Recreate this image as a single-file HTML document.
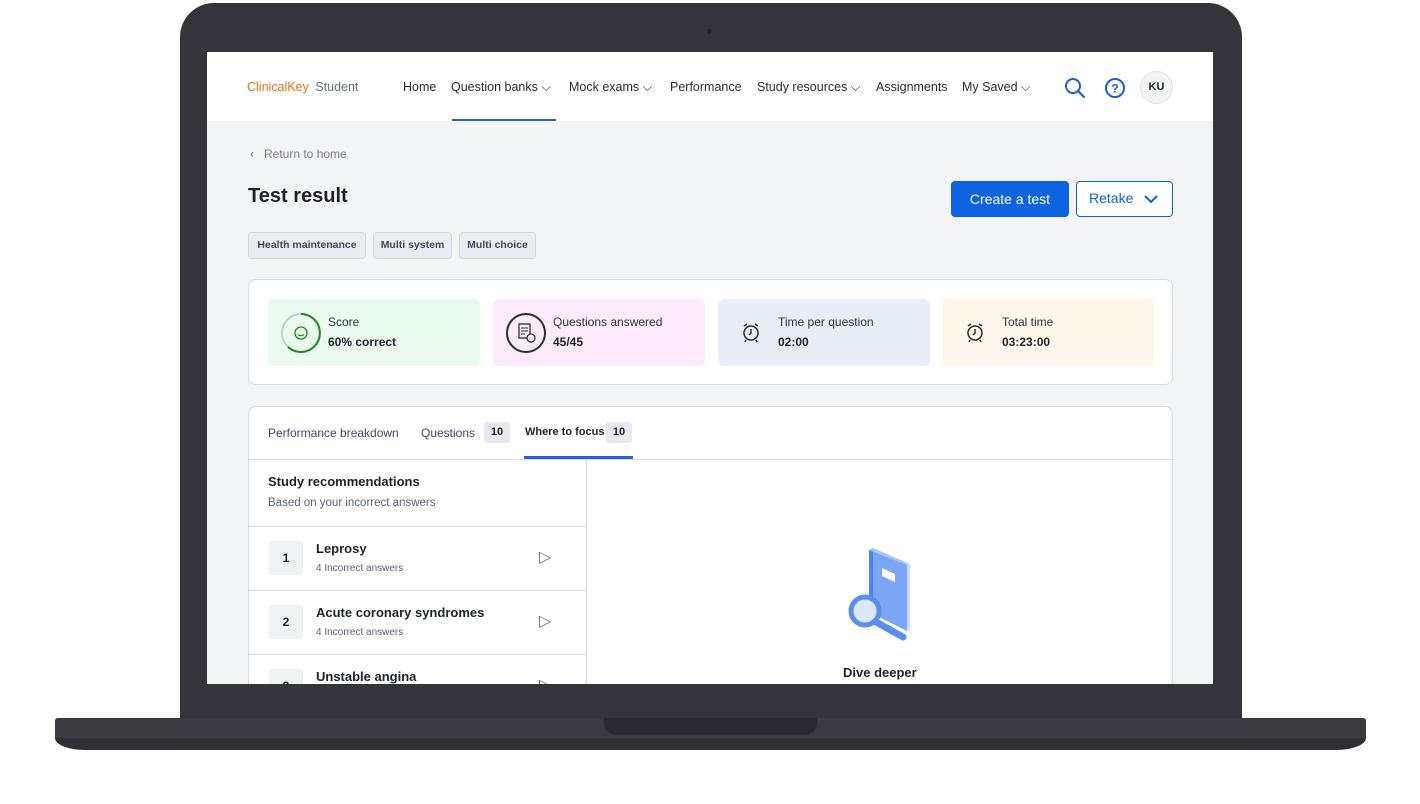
<!DOCTYPE html>
<html><head><meta charset="utf-8"><style>
*{margin:0;padding:0;box-sizing:border-box}
body{width:1420px;height:804px;background:#fff;position:relative;overflow:hidden;font-family:"Liberation Sans",sans-serif;color:#1f2329}
.a{position:absolute}
.body{left:180px;top:3px;width:1062px;height:725px;background:#34343a;border-radius:34px 34px 0 0}
.base{left:55px;top:718px;width:1311px;height:32px;background:#2f2f35;border-radius:3px 3px 30px 30px/3px 3px 12px 12px}
.base2{left:55px;top:718px;width:1311px;height:20px;background:#3a3a40;border-radius:3px 3px 0 0}
.notch{left:604px;top:718px;width:213px;height:17px;background:#2a2a30;border-radius:0 0 12px 12px}
.screen{left:207px;top:52px;width:1006px;height:632px;background:#f2f4f6;overflow:hidden}
.nav{left:0;top:0;width:1006px;height:69px;background:#fff}
.t{position:absolute;white-space:nowrap}
.chip{position:absolute;top:180px;height:27px;border:1px solid #d5d9df;background:#e9ecf0;border-radius:4px;font-size:10.5px;font-weight:bold;color:#3f4a60;line-height:25px;text-align:center}
.card{position:absolute;background:#fff;border:1px solid #d9dde2;border-radius:8px}
.stat{position:absolute;top:19px;width:212px;height:67px;border-radius:6px}
.stat .l{position:absolute;left:60px;top:16px;font-size:12px;color:#2c3440}
.stat .v{position:absolute;left:60px;top:36px;font-size:12px;font-weight:bold;color:#1f2329}
.row{position:absolute;left:0;width:337px;height:64px;border-top:1px solid #d9dde2}
.num{position:absolute;left:20px;top:14px;width:34px;height:34px;background:#f0f2f4;border-radius:3px;font-size:12px;font-weight:bold;text-align:center;line-height:34px}
.rt{position:absolute;left:67px;top:14px;font-size:13px;font-weight:bold}
.rs{position:absolute;left:67px;top:36px;font-size:10px;color:#5a6270}
</style></head><body>
<div class="a body"></div>
<div class="a" style="left:707px;top:29px;width:5px;height:5px;border-radius:50%;background:#26262b"></div>
<div class="a base"></div>
<div class="a base2"></div>
<div class="a notch"></div>
<div class="a screen">
 <div class="a nav">
  <div class="t" style="left:40px;top:28px;font-size:12.5px;color:#e9711c">ClinicalKey <span style="color:#6a6f76;margin-left:3px">Student</span></div>
  <div class="t" style="left:196px;top:28px;font-size:12.5px;color:#2a2e35">Home</div>
  <div class="t" style="left:244px;top:28px;font-size:12.5px;color:#2a2e35">Question banks ⌵</div>
  <div class="a" style="left:245px;top:67px;width:104px;height:2px;background:#2a62d6"></div>
  <div class="t" style="left:362px;top:28px;font-size:12.5px;color:#2a2e35">Mock exams ⌵</div>
  <div class="t" style="left:463px;top:28px;font-size:12.5px;color:#2a2e35">Performance</div>
  <div class="t" style="left:550px;top:28px;font-size:12.5px;color:#2a2e35">Study resources ⌵</div>
  <div class="t" style="left:669px;top:28px;font-size:12.5px;color:#2a2e35">Assignments</div>
  <div class="t" style="left:755px;top:28px;font-size:12.5px;color:#2a2e35">My Saved ⌵</div>
  <svg class="a" style="left:857px;top:25px" width="22" height="22" viewBox="0 0 22 22"><circle cx="9" cy="9" r="7" fill="none" stroke="#1f5fcc" stroke-width="2"/><path d="M14 14l6 6" stroke="#1f5fcc" stroke-width="2.2" stroke-linecap="round"/></svg>
  <svg class="a" style="left:897px;top:25px" width="22" height="22" viewBox="0 0 22 22"><circle cx="11" cy="11" r="9" fill="none" stroke="#1f5fcc" stroke-width="2"/><text x="11" y="15.5" font-size="12" font-weight="bold" text-anchor="middle" fill="#1f5fcc" font-family="Liberation Sans">?</text></svg>
  <div class="a" style="left:933px;top:19px;width:33px;height:33px;border-radius:50%;background:#f2f3f5;border:1px solid #e0e2e6;font-size:11px;font-weight:bold;text-align:center;line-height:31px">KU</div>
 </div>
 <div class="t" style="left:43px;top:95px;font-size:12px;color:#7a818c">‹&nbsp;&nbsp;&nbsp;Return to home</div>
 <div class="t" style="left:41px;top:133px;font-size:20px;font-weight:bold;color:#1f2329">Test result</div>
 <div class="a" style="left:744px;top:129px;width:118px;height:36px;background:#0b63e0;border-radius:4px;color:#fff;font-size:14px;text-align:center;line-height:36px">Create a test</div>
 <div class="a" style="left:869px;top:129px;width:97px;height:36px;background:#fff;border:1.5px solid #0b63e0;border-radius:4px;color:#0b63e0;font-size:14px;line-height:33px;padding-left:12px">Retake
  <svg style="position:absolute;left:67px;top:12px" width="14" height="10" viewBox="0 0 14 10"><path d="M1 2l6 6 6-6" fill="none" stroke="#0b63e0" stroke-width="2"/></svg></div>
 <div class="chip" style="left:41px;width:118px">Health maintenance</div>
 <div class="chip" style="left:166px;width:79px">Multi system</div>
 <div class="chip" style="left:252px;width:77px">Multi choice</div>
 <div class="card" style="left:41px;top:227px;width:925px;height:106px">
  <div class="stat" style="left:19px;background:#ebfaef">
   <svg class="a" style="left:12px;top:13px" width="42" height="42" viewBox="0 0 42 42"><circle cx="21" cy="21" r="19" fill="none" stroke="#c9ccd0" stroke-width="2"/><path d="M21 2A19 19 0 1 1 8 35" fill="none" stroke="#1e8a1e" stroke-width="2"/><circle cx="21" cy="21" r="6" fill="none" stroke="#1e8a1e" stroke-width="1.3"/><path d="M18 22.5q3 2.5 6 0" fill="none" stroke="#1e8a1e" stroke-width="1.2"/></svg>
   <div class="l">Score</div><div class="v">60% correct</div></div>
  <div class="stat" style="left:244px;background:#fdeafb">
   <svg class="a" style="left:12px;top:13px" width="42" height="42" viewBox="0 0 42 42"><circle cx="21" cy="21" r="19" fill="none" stroke="#2a2f38" stroke-width="2"/><rect x="14" y="12" width="11" height="14" fill="none" stroke="#2a2f38" stroke-width="1.3"/><path d="M16 16h7M16 19h7M16 22h4" stroke="#2a2f38"/><circle cx="26" cy="26" r="4" fill="#fdeafb" stroke="#2a2f38" stroke-width="1.3"/></svg>
   <div class="l">Questions answered</div><div class="v">45/45</div></div>
  <div class="stat" style="left:469px;background:#e8eef7">
   <svg class="a" style="left:22px;top:22px" width="22" height="22" viewBox="0 0 22 22"><circle cx="11" cy="12" r="7" fill="none" stroke="#2a2f38" stroke-width="1.5"/><path d="M11 8v4l-2 2M4 5l3-2M18 5l-3-2M6 19l-1 2M16 19l1 2" stroke="#2a2f38" stroke-width="1.5" fill="none"/></svg>
   <div class="l">Time per question</div><div class="v">02:00</div></div>
  <div class="stat" style="left:693px;background:#fff6ec">
   <svg class="a" style="left:22px;top:22px" width="22" height="22" viewBox="0 0 22 22"><circle cx="11" cy="12" r="7" fill="none" stroke="#2a2f38" stroke-width="1.5"/><path d="M11 8v4l-2 2M4 5l3-2M18 5l-3-2M6 19l-1 2M16 19l1 2" stroke="#2a2f38" stroke-width="1.5" fill="none"/></svg>
   <div class="l">Total time</div><div class="v">03:23:00</div></div>
 </div>
 <div class="card" style="left:41px;top:354px;width:925px;height:300px;border-radius:8px 8px 0 0;overflow:hidden">
  <div class="t" style="left:19px;top:19px;font-size:12px;color:#3f4a60">Performance breakdown</div>
  <div class="t" style="left:172px;top:19px;font-size:12px;color:#3f4a60">Questions</div>
  <div class="a" style="left:235px;top:15px;width:26px;height:21px;background:#e6e9ed;border-radius:3px;font-size:11px;font-weight:bold;text-align:center;line-height:21px">10</div>
  <div class="t" style="left:276px;top:19px;font-size:11px;font-weight:bold;color:#1f2329">Where to focus</div>
  <div class="a" style="left:357px;top:15px;width:26px;height:21px;background:#e6e9ed;border-radius:3px;font-size:11px;font-weight:bold;text-align:center;line-height:21px">10</div>
  <div class="a" style="left:275px;top:49px;width:109px;height:3px;background:#2a62d6"></div>
  <div class="a" style="left:0;top:52px;width:925px;height:1px;background:#d9dde2"></div>
  <div class="a" style="left:337px;top:52px;width:1px;height:260px;background:#d9dde2"></div>
  <div class="t" style="left:19px;top:67px;font-size:13px;font-weight:bold">Study recommendations</div>
  <div class="t" style="left:19px;top:90px;font-size:11.5px;color:#5a6270">Based on your incorrect answers</div>
  <div class="row" style="top:119px"><div class="num">1</div><div class="rt">Leprosy</div><div class="rs">4 Incorrect answers</div><div class="t" style="left:290px;top:20px;font-size:16px;color:#6a7080">▷</div></div>
  <div class="row" style="top:183px"><div class="num">2</div><div class="rt">Acute coronary syndromes</div><div class="rs">4 Incorrect answers</div><div class="t" style="left:290px;top:20px;font-size:16px;color:#6a7080">▷</div></div>
  <div class="row" style="top:247px"><div class="num">3</div><div class="rt">Unstable angina</div><div class="t" style="left:290px;top:20px;font-size:16px;color:#6a7080">▷</div></div>
  <svg class="a" style="left:590px;top:137px" width="75" height="100" viewBox="0 0 75 100"><path d="M34 4l34 17v66l-34-17z" fill="#7aa6f5"/><path d="M68 21l3-1v66l-3 1z" fill="#c9dbfc"/><path d="M30 6l4-2v66l-4 2z" fill="#4f86ee"/><path d="M30 6l4-2 37 16-3 1z" fill="#a9c6fa"/><path d="M43 24l13 6v8l-13-6z" fill="#fff"/><circle cx="26" cy="67" r="14" fill="#dce8ff" stroke="#5a8ff0" stroke-width="5"/><path d="M37 78l27 15" stroke="#5a8ff0" stroke-width="7" stroke-linecap="round"/></svg>
  <div class="t" style="left:594px;top:258px;font-size:13px;font-weight:bold">Dive deeper</div>
 </div>
</div>
</body></html>
